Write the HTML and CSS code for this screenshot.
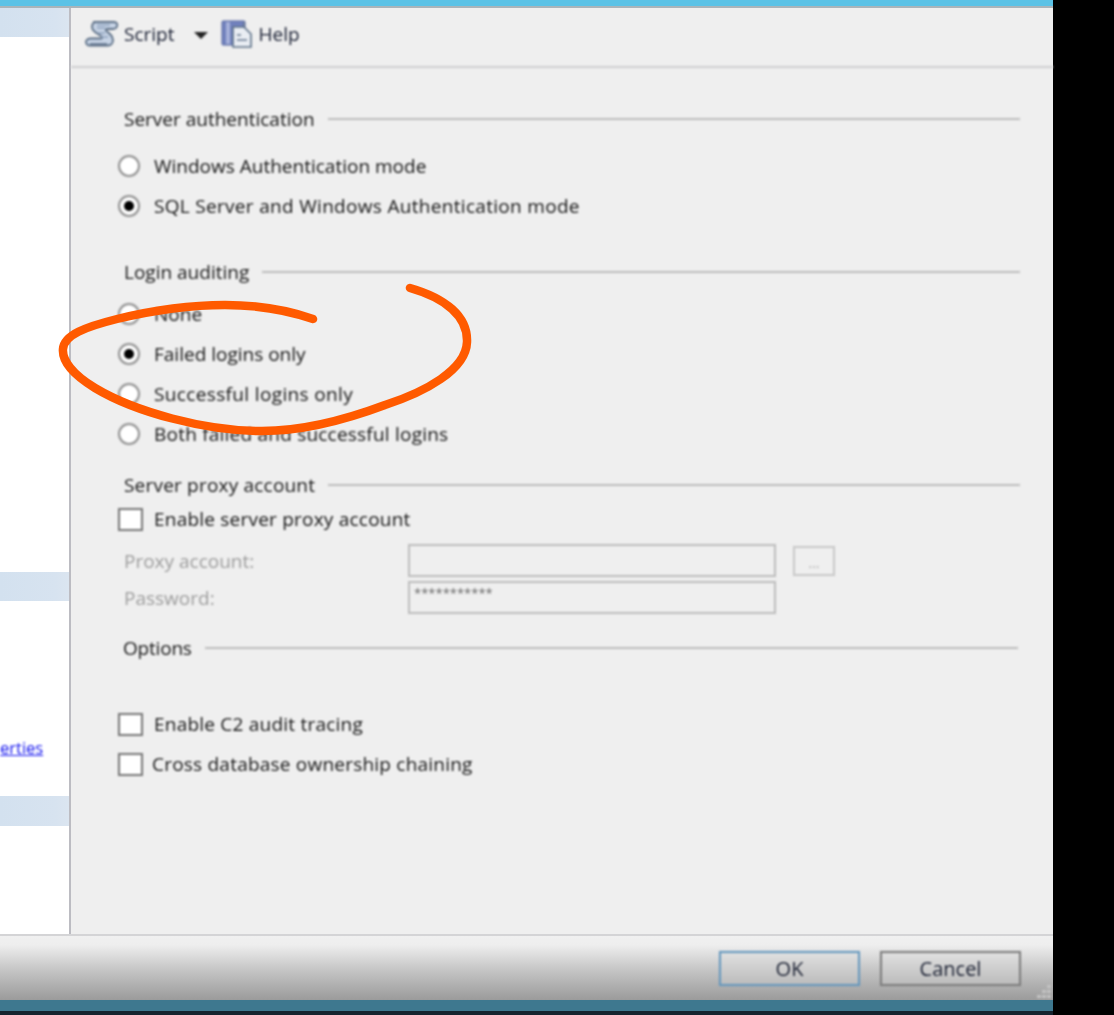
FILE: index.html
```html
<!DOCTYPE html>
<html lang="en">
<head>
<meta charset="utf-8">
<title>Server Properties - Security</title>
<link rel="stylesheet" href="styles.css">
</head>
<body>
<div class="stage">
  <div class="window">
    <div class="topbar"></div>
    <div class="body-row">
      <aside class="side">
        <div class="side-head side-head-a"></div>
        <div class="side-head side-head-b"></div>
        <div class="side-link-wrap soft"><a class="side-link" href="#">erties</a></div>
        <div class="side-head side-head-c"></div>
      </aside>
      <main class="main">
        <div class="toolbar soft">
          <svg class="tool-icon" width="34" height="30" viewBox="0 0 34 30">
            <path d="M9 3h20c2.500 0 4 2 3 4.500-.6 1.500-2 2.500-4 2.500h-6c-1.500 0-1.500 1.500 0 2.500l3 2.500c2 1.800 3 3.500 3 6 0 3-2 5.500-5 5.500H5c-2.500 0-4-1.500-4-3.500s2-3.500 4.500-3.500H16c1.500 0 1.500-1.500 0-2.500l-6-4c-2-1.500-3-2.500-3-5 0-2 .5-3.500 2-4.500z" fill="#c6d3e5" stroke="#5a6d84" stroke-width="1.800"/>
            <path d="M12 6h13M12 9h8M13 14h7M16 18h7" stroke="#8fa3bd" stroke-width="1.300"/>
            <path d="M5 25h17" stroke="#5a6d84" stroke-width="1.500"/>
          </svg>
          <span class="tool-text">Script</span>
          <span class="caret"></span>
          <svg class="tool-icon" width="32" height="28" viewBox="0 0 32 28">
            <rect x="1" y="1" width="23" height="24" rx="1" fill="#7181bd" stroke="#56669f"/>
            <rect x="5" y="2" width="4" height="22" fill="#a6b1da"/>
            <path d="M12 7h11l7 7v13H12z" fill="#e9edf3" stroke="#5d7188" stroke-width="1.600"/>
            <path d="M23 2v6M16 15h4M16 20h10" stroke="#66778f" stroke-width="1.600"/>
          </svg>
          <span class="tool-text">Help</span>
        </div>
        <div class="form soft">
          <div class="section">
            <span class="section-title">Server authentication</span><span class="rule"></span>
          </div>
          <div class="group-auth">
            <label class="row"><span class="radio"></span><span class="lbl">Windows Authentication mode</span></label>
            <label class="row"><span class="radio on"></span><span class="lbl lbl-sql">SQL Server and Windows Authentication mode</span></label>
          </div>

          <div class="section login">
            <span class="section-title">Login auditing</span><span class="rule"></span>
          </div>
          <div class="group-audit">
            <label class="row"><span class="radio"></span><span class="lbl">None</span></label>
            <label class="row"><span class="radio on"></span><span class="lbl">Failed logins only</span></label>
            <label class="row"><span class="radio"></span><span class="lbl lbl-wide">Successful logins only</span></label>
            <label class="row"><span class="radio"></span><span class="lbl lbl-mid">Both failed and successful logins</span></label>
          </div>

          <div class="section proxy">
            <span class="section-title">Server proxy account</span><span class="rule"></span>
          </div>
          <label class="row row-check row-proxy"><span class="check"></span><span class="lbl lbl-mid">Enable server proxy account</span></label>
          <div class="fields">
            <span class="field-label">Proxy account:</span>
            <span class="input"></span>
            <span class="dots-btn">...</span>
            <span class="field-label field-label-second">Password:</span>
            <span class="input pw">***********</span>
          </div>

          <div class="section options">
            <span class="section-title">Options</span><span class="rule"></span>
          </div>
          <div class="group-options">
            <label class="row row-check"><span class="check"></span><span class="lbl lbl-mid">Enable C2 audit tracing</span></label>
            <label class="row row-check"><span class="check"></span><span class="lbl lbl-mid lbl-tight">Cross database ownership chaining</span></label>
          </div>
        </div>
      </main>
    </div>
    <footer class="footer">
      <div class="footer-buttons soft">
        <button class="btn btn-ok" type="button">OK</button>
        <button class="btn" type="button">Cancel</button>
      </div>
      <svg class="grip" width="16" height="15" viewBox="0 0 16 15">
        <g fill="#c4c4c4"><rect x="11" y="1" width="4" height="3"/><rect x="6" y="6" width="4" height="3"/><rect x="11" y="6" width="4" height="3"/><rect x="1" y="11" width="4" height="3"/><rect x="6" y="11" width="4" height="3"/><rect x="11" y="11" width="4" height="3"/></g>
      </svg>
    </footer>
    <div class="teal"></div>
    <div class="dark"></div>
  </div>
  <svg class="scribble" width="1114" height="1015" viewBox="0 0 1114 1015">
    <path d="M410 288C445 298 468 316 467 342C466 370 425 392 385 405C345 420 300 431 262 431C205 431 135 412 95 388C72 374 62 360 63 349C64 335 85 327 117 319C150 311 190 305 225 305C258 305 290 311 313 319" fill="none" stroke="#ff5a00" stroke-width="8.500" stroke-linecap="round" stroke-linejoin="round"/>
  </svg>
</div>
</body>
</html>
```
FILE: styles.css
```css
* { box-sizing: border-box; }
html, body { margin: 0; height: 100%; background: #000; overflow: hidden; }
.stage { position: relative; width: 1114px; height: 1015px; background: #000; overflow: hidden; }
.window {
  width: 1053px; height: 1015px; display: flex; flex-direction: column;
  background: #efefef; color: #141414;
  font-family: "Open Sans", "Noto Sans", "Liberation Sans", sans-serif;
  font-size: 19px;
}
.soft { filter: blur(0.8px); }
.topbar { height: 8px; flex: none; background: #5bc2e6; border-bottom: 2px solid #a9b4ba; }
.body-row { flex: 1; min-height: 0; display: flex; border-bottom: 2px solid #d4d4d6; }

.side { width: 71px; flex: none; background: #fff; border-right: 2px solid #bcbcc2; display: flex; flex-direction: column; }
.side-head { height: 29px; flex: none; background: linear-gradient(90deg, #d3e1ef, #d7e3f0 80%, #dbe5f0); }
.side-head-b { margin-top: 535px; }
.side-head-c { margin-top: 35px; height: 30px; }
.side-link-wrap { margin-top: 134px; height: 26px; line-height: 26px; }
.side-link { color: #1010ee; text-decoration: underline; display: block; width: 42px; text-align: left; font-size: 16.500px; }

.main { flex: 1; min-width: 0; display: flex; flex-direction: column; }
.toolbar { height: 60px; flex: none; display: flex; align-items: center; padding: 0 0 6px 14px; border-bottom: 2px solid #cfcfd1; }
.tool-text { color: #161c30; line-height: 30px; }
.tool-icon { flex: none; margin-right: 5px; }
.caret { width: 0; height: 0; border: 7px solid transparent; border-top: 7px solid #222; border-bottom: 0; margin: 2px 13px 0 20px; }

.form { padding: 36px 33px 0 47px; }
.section { height: 30px; display: flex; align-items: center; gap: 13px; padding-left: 6px; }
.section-title { flex: none; color: #161616; }
.rule { flex: 1; height: 2px; background: #bdbdbd; }
.group-auth { margin-top: 12px; }
.login { margin-top: 31px; }
.group-audit { margin-top: 7px; }
.proxy { margin-top: 16px; }
.proxy .section-title { letter-spacing: 0.200px; }
.options { margin-top: 19px; padding-left: 5px; padding-right: 2px; }
.options .section-title { letter-spacing: -0.200px; }
.group-options { margin-top: 41px; }

.row { height: 40px; display: flex; align-items: center; gap: 14px; }
.row-check { gap: 11px; }
.row-proxy { height: 38px; }
.lbl { color: #141414; white-space: nowrap; line-height: 30px; }
.lbl-sql { letter-spacing: 0.310px; }
.lbl-wide { letter-spacing: 0.360px; }
.lbl-mid { letter-spacing: 0.220px; }
.lbl-tight { margin-left: -2px; }

.radio { width: 22px; height: 22px; flex: none; border-radius: 50%; background: #fff; border: 2px solid #8f8f8f; display: flex; align-items: center; justify-content: center; }
.radio.on::after { content: ""; width: 10px; height: 10px; border-radius: 50%; background: #000; }
.check { width: 25px; height: 23px; flex: none; background: #fff; border: 2px solid #757575; }

.fields { display: grid; grid-template-columns: 284px 368px 42px; grid-template-rows: 33px 33px; row-gap: 4px; margin-top: 6px; padding-left: 6px; align-items: center; }
.field-label { color: #9c9c9c; line-height: 30px; }
.field-label-second { grid-column: 1; }
.input { height: 33px; border: 2px solid #bcbcbc; background: #efefef; display: block; color: #606060; font-size: 13px; line-height: 14px; padding: 3px 4px; overflow: hidden; }
.input.pw { grid-column: 2; }
.dots-btn { grid-column: 3; width: 42px; height: 30px; margin-left: 17px; border: 2px solid #c8c8c8; color: #b0b0b0; text-align: center; font-size: 14px; line-height: 30px; }

.footer { height: 64px; flex: none; position: relative; display: flex; justify-content: flex-end; padding: 15px 32px 0 0; background: linear-gradient(180deg, #f0f0f0 0, #eeeeee 14%, #c6c6c6 52%, #9b9b9b 100%); }
.footer-buttons { display: flex; gap: 20px; height: 35px; }
.btn { width: 141px; height: 35px; border: 2px solid #7a7a7a; background: linear-gradient(180deg, #e0e0e0, #bcbcbc); color: #1a2032; font: inherit; font-size: 20px; padding: 0; }
.btn-ok { border-color: #6296bd; }
.grip { position: absolute; right: 1px; bottom: 1px; filter: blur(0.8px); }
.teal { height: 11px; flex: none; background: #3e788f; }
.dark { height: 4px; flex: none; background: #16232e; }

.scribble { position: absolute; left: 0; top: 0; pointer-events: none; }
```
